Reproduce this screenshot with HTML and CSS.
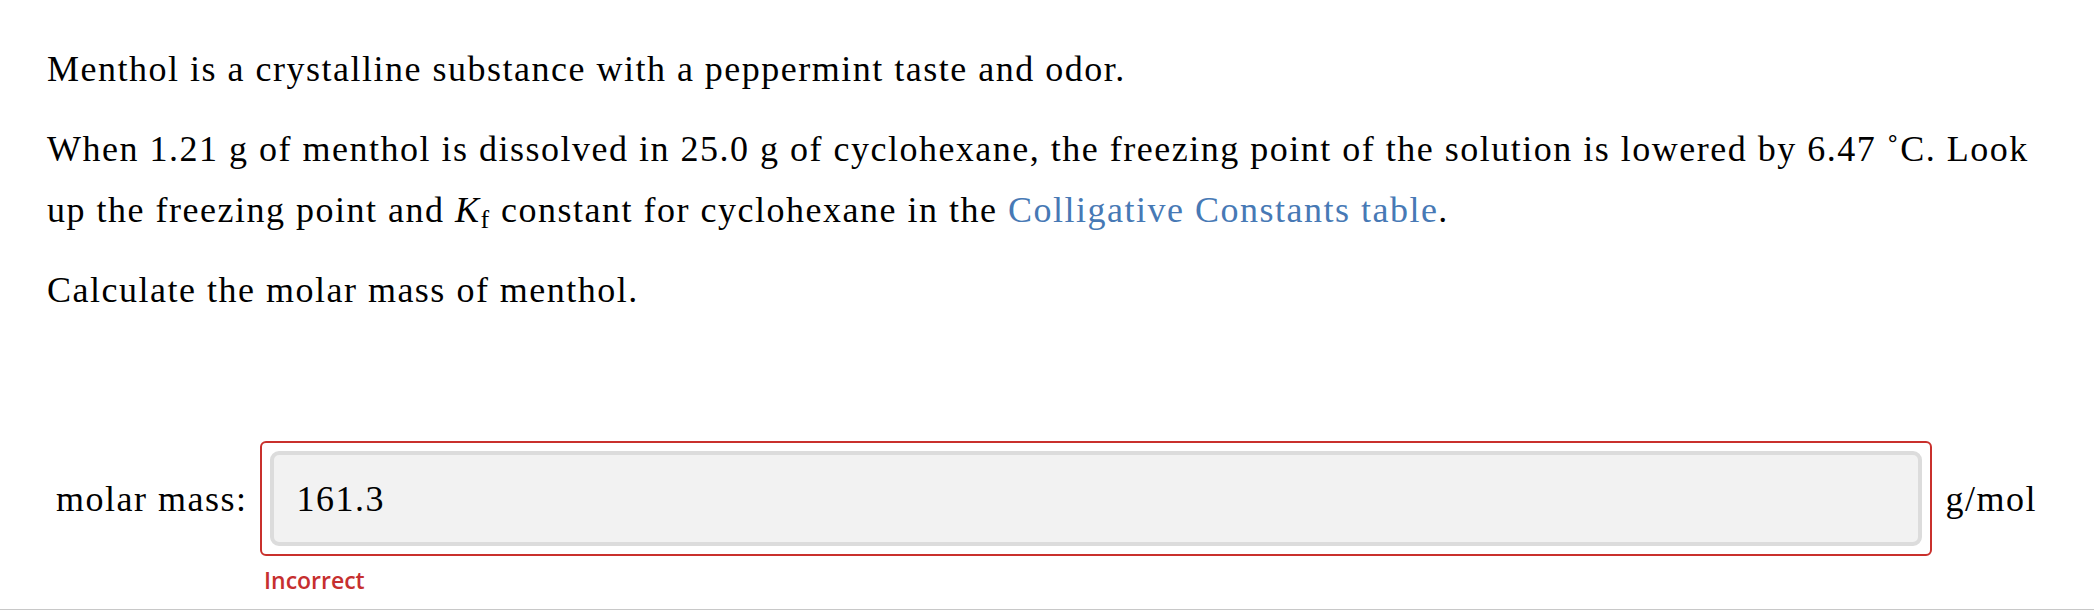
FILE: index.html
```html
<!DOCTYPE html>
<html lang="en">
<head>
<meta charset="utf-8">
<title>Menthol molar mass</title>
<link rel="stylesheet" href="styles.css">
</head>
<body>
<div class="page">
  <div class="question">
    <p class="para">Menthol is a crystalline substance with a peppermint taste and odor.</p>
    <p class="para">When 1.21 g of menthol is dissolved in 25.0 g of cyclohexane, the freezing point of the solution is lowered by 6.47 ˚C. Look up the freezing point and <span class="var">K</span><sub class="sub">f</sub> constant for cyclohexane in the <a class="link" href="#">Colligative Constants table</a>.</p>
    <p class="para">Calculate the molar mass of menthol.</p>
  </div>
  <div class="answer">
    <div class="row">
      <label class="label" for="mm">molar mass:</label>
      <div class="field">
        <input class="input" id="mm" type="text" value="161.3">
      </div>
      <span class="unit">g/mol</span>
    </div>
    <div class="feedback">Incorrect</div>
  </div>
</div>
</body>
</html>
```
FILE: styles.css
```css
html, body {
  margin: 0;
  padding: 0;
  background: #fff;
}
.page {
  font-family: "Liberation Serif", "Times New Roman", serif;
  font-size: 36px;
  letter-spacing: 1.5px;
  color: #000;
  border-bottom: 1px solid #c8c8c8;
  height: 609px;
  box-sizing: content-box;
}
.question {
  padding: 39px 47px 0 47px;
}
.para {
  margin: 0 0 19px 0;
  line-height: 61px;
}
.var {
  font-style: italic;
}
.sub {
  font-size: 26px;
  vertical-align: -6px;
  line-height: 0;
}
.link {
  color: #4779b5;
  text-decoration: none;
}
.answer {
  margin-top: 120px;
  padding: 0 47px;
}
.row {
  display: flex;
  align-items: center;
}
.label {
  padding-left: 9px;
  margin-right: 13px;
  white-space: nowrap;
}
.field {
  flex: 1;
  border: 2px solid #c9302c;
  border-radius: 6px;
  padding: 8px;
}
.input {
  display: block;
  width: 100%;
  box-sizing: border-box;
  height: 95px;
  border: 4px solid #dcdcdc;
  border-radius: 9px;
  background: #f2f2f2;
  padding: 0 22px;
  font-family: "Liberation Serif", "Times New Roman", serif;
  font-size: 36px;
  letter-spacing: 1.5px;
  color: #000;
  outline: none;
}
.unit {
  margin-left: 13px;
  padding-right: 10px;
  white-space: nowrap;
}
.feedback {
  font-family: "Open Sans", "Noto Sans", sans-serif;
  font-weight: 600;
  font-size: 23px;
  letter-spacing: 0;
  color: #c62f2f;
  margin-top: 10px;
  padding-left: 217px;
  line-height: 28px;
}
```
